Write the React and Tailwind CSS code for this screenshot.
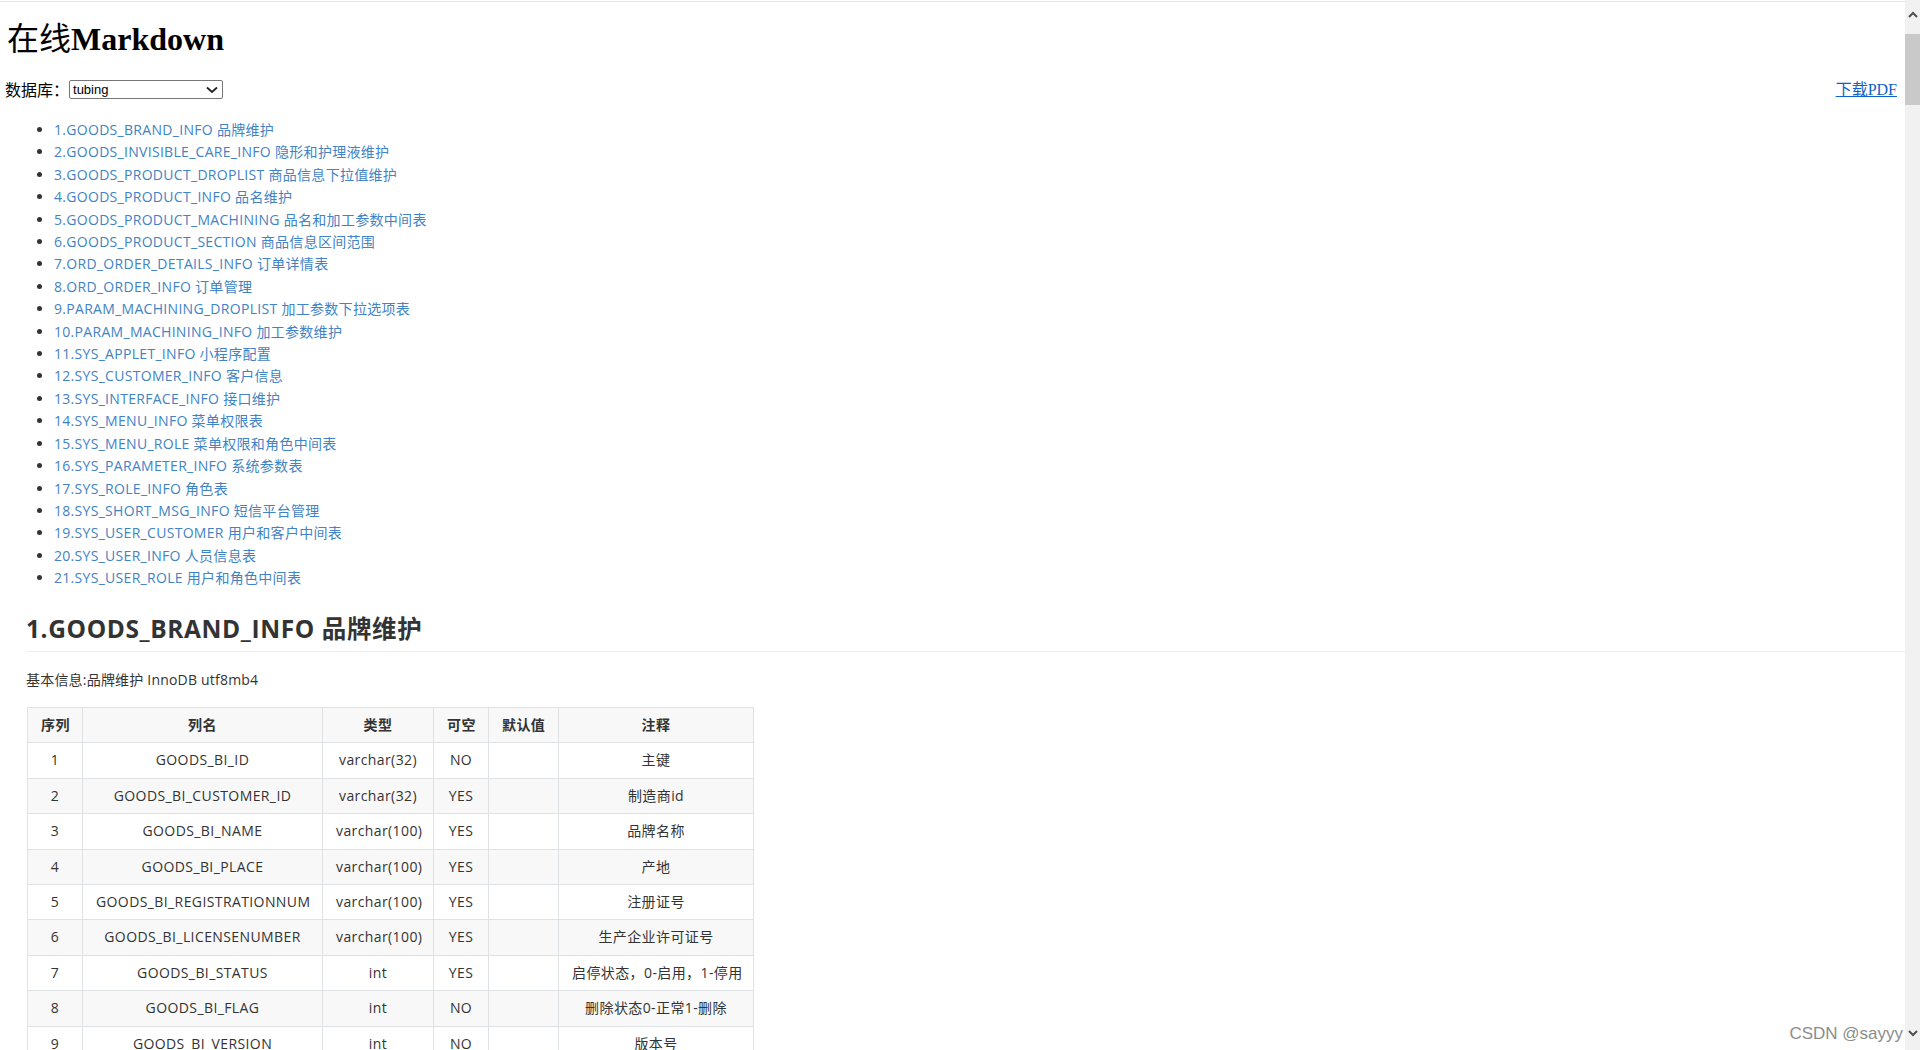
import React from "react";

const tables = [
  "1.GOODS_BRAND_INFO 品牌维护",
  "2.GOODS_INVISIBLE_CARE_INFO 隐形和护理液维护",
  "3.GOODS_PRODUCT_DROPLIST 商品信息下拉值维护",
  "4.GOODS_PRODUCT_INFO 品名维护",
  "5.GOODS_PRODUCT_MACHINING 品名和加工参数中间表",
  "6.GOODS_PRODUCT_SECTION 商品信息区间范围",
  "7.ORD_ORDER_DETAILS_INFO 订单详情表",
  "8.ORD_ORDER_INFO 订单管理",
  "9.PARAM_MACHINING_DROPLIST 加工参数下拉选项表",
  "10.PARAM_MACHINING_INFO 加工参数维护",
  "11.SYS_APPLET_INFO 小程序配置",
  "12.SYS_CUSTOMER_INFO 客户信息",
  "13.SYS_INTERFACE_INFO 接口维护",
  "14.SYS_MENU_INFO 菜单权限表",
  "15.SYS_MENU_ROLE 菜单权限和角色中间表",
  "16.SYS_PARAMETER_INFO 系统参数表",
  "17.SYS_ROLE_INFO 角色表",
  "18.SYS_SHORT_MSG_INFO 短信平台管理",
  "19.SYS_USER_CUSTOMER 用户和客户中间表",
  "20.SYS_USER_INFO 人员信息表",
  "21.SYS_USER_ROLE 用户和角色中间表",
];

const columns = [
  { no: 1, name: "GOODS_BI_ID", type: "varchar(32)", nullable: "NO", def: "", comment: "主键" },
  { no: 2, name: "GOODS_BI_CUSTOMER_ID", type: "varchar(32)", nullable: "YES", def: "", comment: "制造商id" },
  { no: 3, name: "GOODS_BI_NAME", type: "varchar(100)", nullable: "YES", def: "", comment: "品牌名称" },
  { no: 4, name: "GOODS_BI_PLACE", type: "varchar(100)", nullable: "YES", def: "", comment: "产地" },
  { no: 5, name: "GOODS_BI_REGISTRATIONNUM", type: "varchar(100)", nullable: "YES", def: "", comment: "注册证号" },
  { no: 6, name: "GOODS_BI_LICENSENUMBER", type: "varchar(100)", nullable: "YES", def: "", comment: "生产企业许可证号" },
  { no: 7, name: "GOODS_BI_STATUS", type: "int", nullable: "YES", def: "", comment: "启停状态，0-启用，1-停用" },
  { no: 8, name: "GOODS_BI_FLAG", type: "int", nullable: "NO", def: "", comment: "删除状态0-正常1-删除" },
  { no: 9, name: "GOODS_BI_VERSION", type: "int", nullable: "NO", def: "", comment: "版本号" },
];

const cell = "border border-[#dfe2e5] px-[13px] py-[6px] text-center whitespace-nowrap";

const Chevron = ({ up }) => (
  <svg width="10" height="7" viewBox="0 0 10 7" className="block">
    <path
      d={up ? "M1 6 L5 2 L9 6" : "M1 1 L5 5 L9 1"}
      fill="none"
      stroke="#505050"
      strokeWidth="2"
    />
  </svg>
);

const Scrollbar = () => (
  <div className="w-[15px] h-full bg-[#f1f1f1] flex flex-col items-center">
    <div className="h-[17px] w-full flex items-end justify-center mt-[1px]">
      <Chevron up />
    </div>
    <div className="mt-[16px] w-full h-[71px] bg-[#c9c9c9]" />
    <div className="flex-1" />
    <div className="h-[24px] w-full flex items-start justify-center pt-[4px]">
      <Chevron />
    </div>
  </div>
);

export default function App() {
  return (
    <div className="relative h-screen overflow-hidden flex bg-white">
      <div className="flex-1 min-w-0 mt-[1px] border-t border-[#e8e8e8]">
        <h1 className="mt-[19px] pl-[7px] text-[32px] leading-[37px] font-bold text-black font-['Liberation_Serif','Noto_Sans_CJK_SC',serif]">
          <span className="font-normal">在线</span>Markdown
        </h1>

        <div className="mt-[22px] pl-[5px] pr-[8px] flex items-center justify-between h-[19px] text-[16px] text-black font-['Liberation_Serif','Noto_Sans_CJK_SC',serif]">
          <div className="flex items-center">
            <span className="font-['Noto_Sans_CJK_SC',sans-serif] leading-[19px]">数据库：</span>
            <div className="w-[154px] h-[19px] border border-[#767676] rounded-[2px] flex items-center justify-between pl-[3px] pr-[4px] text-[13px] font-['Liberation_Sans',sans-serif]">
              <span>tubing</span>
              <svg width="12" height="8" viewBox="0 0 12 8">
                <path d="M1 1.5 L6 6 L11 1.5" fill="none" stroke="#222" strokeWidth="1.8" />
              </svg>
            </div>
          </div>
          <a href="#" className="text-[#0f62c9] underline">
            下载PDF
          </a>
        </div>

        <div className="pl-[26px] text-[14px] leading-[22.4px] text-[#333] font-['Open_Sans','Noto_Sans_CJK_SC',sans-serif]">
          <ul className="mt-[20px] pl-[28px] list-disc tracking-[0.3px]">
            {tables.map((t) => (
              <li key={t} className="marker:text-[#333]">
                <a href="#" className="text-[#4183c4]">
                  {t}
                </a>
              </li>
            ))}
          </ul>

          <h2 className="mt-[24px] text-[24.5px] leading-[30px] font-bold tracking-[0.6px] text-[#333] pb-[7px] border-b border-[#eeeeee]">
            1.GOODS_BRAND_INFO 品牌维护
          </h2>

          <p className="mt-[17px] tracking-[0.2px]">基本信息:品牌维护 InnoDB utf8mb4</p>

          <table className="mt-[16px] ml-[1px] border-collapse table-fixed w-[726px] tracking-[0.4px]">
            <colgroup>
              <col className="w-[55px]" />
              <col className="w-[240px]" />
              <col className="w-[111px]" />
              <col className="w-[55px]" />
              <col className="w-[70px]" />
              <col className="w-[195px]" />
            </colgroup>
            <thead className="bg-[#f8f8f8]">
              <tr>
                <th className={cell + " font-bold"}>序列</th>
                <th className={cell + " font-bold"}>列名</th>
                <th className={cell + " font-bold"}>类型</th>
                <th className={cell + " font-bold"}>可空</th>
                <th className={cell + " font-bold"}>默认值</th>
                <th className={cell + " font-bold"}>注释</th>
              </tr>
            </thead>
            <tbody>
              {columns.map((c) => (
                <tr key={c.no} className={c.no % 2 === 0 ? "bg-[#f8f8f8]" : "bg-white"}>
                  <td className={cell}>{c.no}</td>
                  <td className={cell}>{c.name}</td>
                  <td className={cell}>{c.type}</td>
                  <td className={cell}>{c.nullable}</td>
                  <td className={cell}>{c.def}</td>
                  <td className={cell}>{c.comment}</td>
                </tr>
              ))}
            </tbody>
          </table>
        </div>
      </div>

      <Scrollbar />

      <div className="absolute right-[17px] bottom-[6px] text-[17px] leading-[20px] text-[#8c8c8c] font-['Liberation_Sans',sans-serif] [text-shadow:0_0_2px_#fff]">
        CSDN @sayyy
      </div>
    </div>
  );
}
